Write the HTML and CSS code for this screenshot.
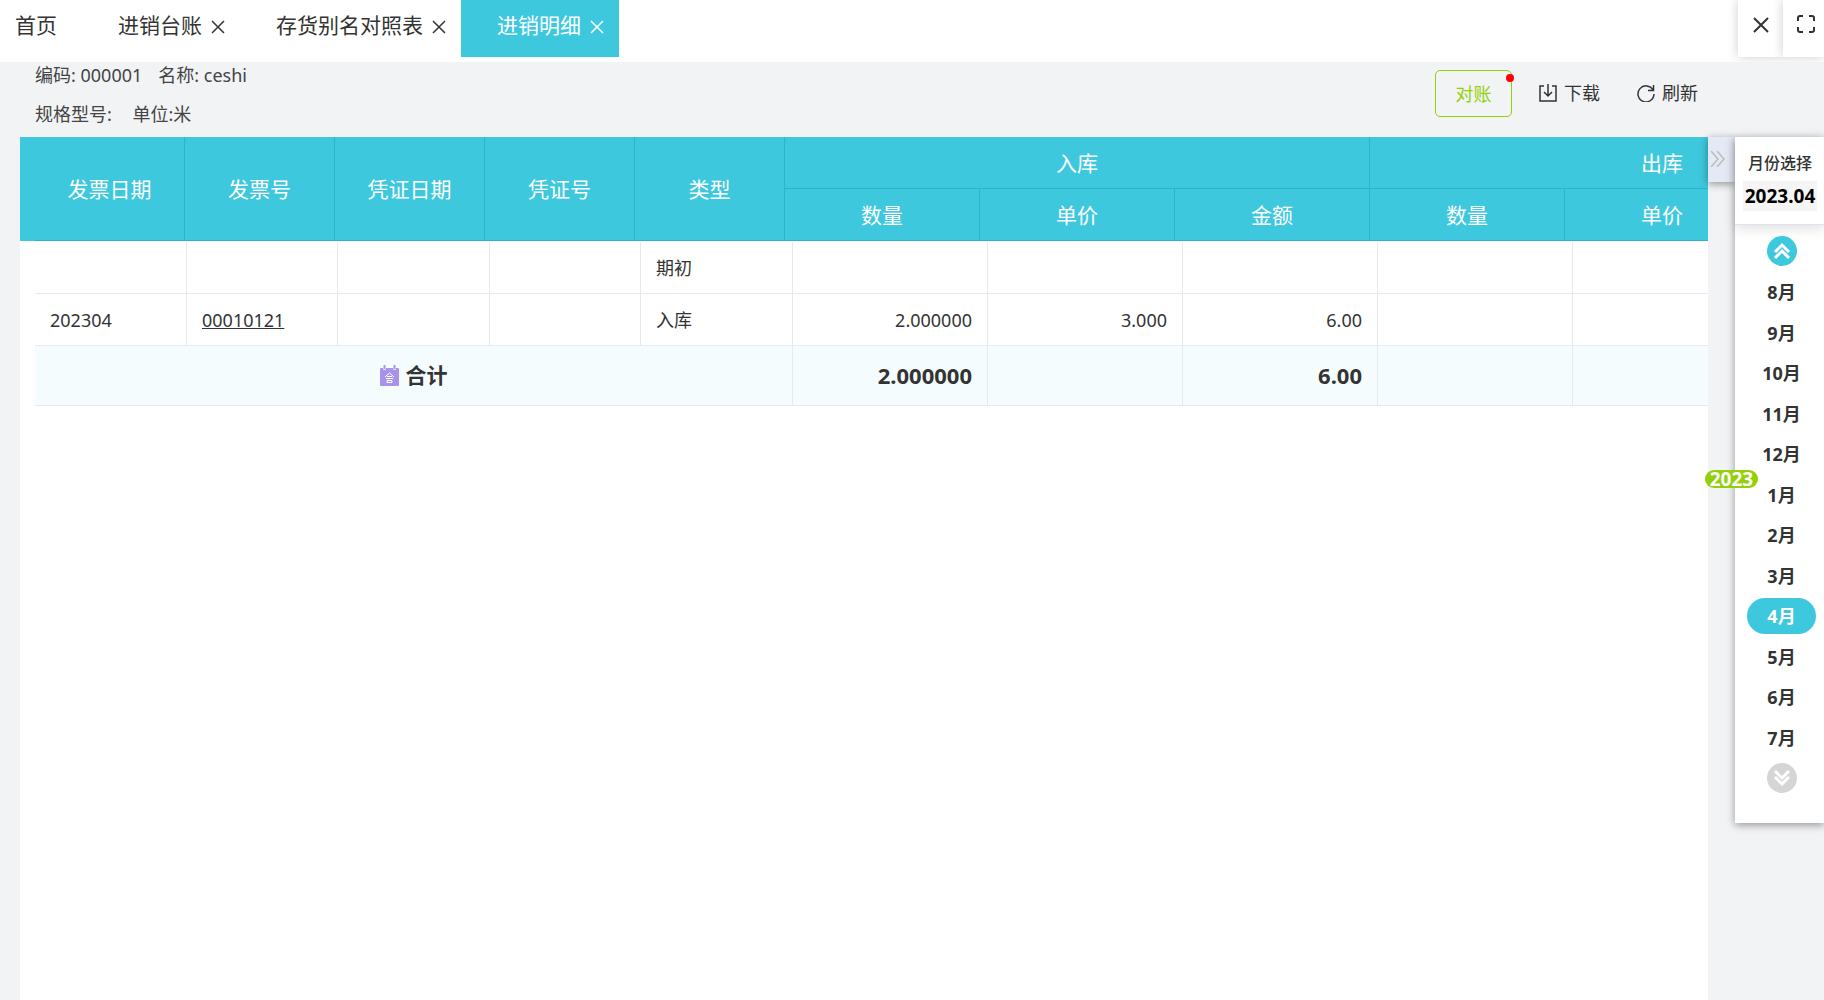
FILE: index.html
```
<!DOCTYPE html>
<html lang="zh-CN">
<head>
    <meta charset="UTF-8">
    <meta name="viewport" content="width=device-width, initial-scale=1.0">
    <title>进销明细</title>
    <link rel="stylesheet" href="styles.css">
</head>
<body>

    <header class="topbar">
        <nav class="tabs">
            <div class="tab home"><a href="#">首页</a></div>
            <div class="tab">
                <a href="#">进销台账</a>
                <button class="tab-close" aria-label="关闭"><svg viewBox="0 0 14 14"><path d="M1 1l12 12M13 1L1 13"/></svg></button>
            </div>
            <div class="tab">
                <a href="#">存货别名对照表</a>
                <button class="tab-close" aria-label="关闭"><svg viewBox="0 0 14 14"><path d="M1 1l12 12M13 1L1 13"/></svg></button>
            </div>
            <div class="tab active">
                <a href="#">进销明细</a>
                <button class="tab-close" aria-label="关闭"><svg viewBox="0 0 14 14"><path d="M1 1l12 12M13 1L1 13"/></svg></button>
            </div>
        </nav>
        <button class="win-btn close-all" aria-label="全部关闭">
            <svg width="16" height="16" viewBox="0 0 16 16"><path d="M1 1l14 14M15 1L1 15"/></svg>
        </button>
        <button class="win-btn fullscreen" aria-label="全屏">
            <svg width="18" height="18" viewBox="0 0 18 18"><path d="M1 6V3q0-2 2-2h3M12 1h3q2 0 2 2v3M17 12v3q0 2-2 2h-3M6 17H3q-2 0-2-2v-3"/></svg>
        </button>
    </header>

    <section class="toolbar">
        <div class="info">
            <p><span>编码: 000001</span><span>名称: ceshi</span></p>
            <p><span>规格型号:&nbsp;</span><span>单位:米</span></p>
        </div>
        <div class="actions">
            <button class="btn-check">对账<i class="dot"></i></button>
            <button class="btn-text">
                <svg width="18" height="18" viewBox="0 0 18 18"><path d="M5 2H1v15h16V2h-4M9 0v12M5 8l4 4 4-4"/></svg>
                下载
            </button>
            <button class="btn-text">
                <svg width="18" height="18" viewBox="0 0 18 18"><path d="M16 6A8 8 0 1 0 17 10M16.500 1v5.500H11"/></svg>
                刷新
            </button>
        </div>
    </section>

    <main class="content">
        <div class="grid">
            <div class="grid-head">
                <table>
                    <colgroup>
                        <col span="5" class="w150">
                        <col span="6" class="w195">
                    </colgroup>
                    <thead>
                        <tr>
                            <th rowspan="2">发票日期</th>
                            <th rowspan="2">发票号</th>
                            <th rowspan="2">凭证日期</th>
                            <th rowspan="2">凭证号</th>
                            <th rowspan="2">类型</th>
                            <th colspan="3">入库</th>
                            <th colspan="3">出库</th>
                        </tr>
                        <tr>
                            <th>数量</th>
                            <th>单价</th>
                            <th>金额</th>
                            <th>数量</th>
                            <th>单价</th>
                            <th></th>
                        </tr>
                    </thead>
                </table>
            </div>
            <div class="grid-body">
                <table>
                    <colgroup>
                        <col class="w152">
                        <col class="w151">
                        <col class="w152">
                        <col class="w151">
                        <col class="w152">
                        <col span="6" class="w195">
                    </colgroup>
                    <tbody>
                        <tr>
                            <td></td>
                            <td></td>
                            <td></td>
                            <td></td>
                            <td>期初</td>
                            <td></td>
                            <td></td>
                            <td></td>
                            <td></td>
                            <td></td>
                            <td></td>
                        </tr>
                        <tr>
                            <td>202304</td>
                            <td><a href="#">00010121</a></td>
                            <td></td>
                            <td></td>
                            <td>入库</td>
                            <td class="num">2.000000</td>
                            <td class="num">3.000</td>
                            <td class="num">6.00</td>
                            <td></td>
                            <td></td>
                            <td></td>
                        </tr>
                    </tbody>
                    <tfoot>
                        <tr>
                            <td colspan="5">
                                <div class="total">
                                    <svg class="total-icon" width="19" height="22" viewBox="0 0 19 22">
                                        <path fill="#a992ea" d="M1 4h2v1q1 2 3 0V4h7v1q2 2 3 0V4h2q1 0 1 1v16q0 1-1 1H1q-1 0-1-1V5q0-1 1-1z"/>
                                        <path stroke="#a992ea" stroke-width="2" d="M4.500 1v4M14.500 1v4"/>
                                        <path fill="none" stroke="#fff" d="M5 13l4.500-4 4.500 4M7 12.500h5M6 14.500h7M7 16.500h5v2H7z"/>
                                    </svg>
                                    <span>合计</span>
                                </div>
                            </td>
                            <td class="num">2.000000</td>
                            <td></td>
                            <td class="num">6.00</td>
                            <td></td>
                            <td></td>
                            <td></td>
                        </tr>
                    </tfoot>
                </table>
            </div>
        </div>

        <aside class="side">
            <button class="fold" aria-label="收起">
                <svg width="16" height="16" viewBox="0 0 16 16"><path d="M1 0l7 8-7 8M7 0l7 8-7 8"/></svg>
            </button>
            <div class="months">
                <div class="months-head">
                    <p class="label">月份选择</p>
                    <p class="current">2023.04</p>
                </div>
                <button class="arrow up" aria-label="上一年">
                    <svg width="18" height="18" viewBox="0 0 18 18"><path d="M2 10l7-7 7 7M2 16l7-7 7 7"/></svg>
                </button>
                <ul class="month-list">
                    <li><button>8月</button></li>
                    <li><button>9月</button></li>
                    <li><button>10月</button></li>
                    <li><button>11月</button></li>
                    <li><button>12月</button></li>
                    <li><span class="year">2023</span><button>1月</button></li>
                    <li><button>2月</button></li>
                    <li><button>3月</button></li>
                    <li><button class="on">4月</button></li>
                    <li><button>5月</button></li>
                    <li><button>6月</button></li>
                    <li><button>7月</button></li>
                </ul>
                <button class="arrow down" aria-label="下一年">
                    <svg width="18" height="18" viewBox="0 0 18 18"><path d="M2 2l7 7 7-7M2 8l7 7 7-7"/></svg>
                </button>
            </div>
        </aside>
    </main>

</body>
</html>
```

FILE: styles.css
```
* {
    box-sizing: border-box;
}

body {
    margin: 0;
    min-height: 100vh;
    display: flex;
    flex-direction: column;
    background: #f2f3f5;
    color: #333;
    font-family: "Noto Sans", "Noto Sans CJK SC", sans-serif;
    font-size: 18px;
    line-height: 24px;
    overflow-x: hidden;
}

p, ul {
    margin: 0;
    padding: 0;
    list-style: none;
}

button {
    padding: 0;
    border: none;
    background: none;
    color: inherit;
    font: inherit;
    cursor: pointer;
}

a {
    color: inherit;
}

svg {
    display: block;
}

/* tabs */
.topbar {
    display: flex;
    height: 62px;
    padding-bottom: 5px;
    background: #fff;
    overflow: hidden;
}

.tabs {
    display: flex;
    flex: 1;
}

.tab {
    display: flex;
    align-items: center;
    gap: 9px;
    padding: 0 15px 7px 36px;
    font-size: 21px;
}

.tab.home {
    padding: 0 25px 7px 15px;
}

.tab.active {
    background: #3ec8de;
    color: #fff;
}

.tab a {
    text-decoration: none;
}

.tab-close {
    padding-top: 4px;
}

.tab-close svg {
    width: 14px;
    height: 14px;
}

.tab-close path, .win-btn path {
    fill: none;
    stroke: currentColor;
    stroke-width: 2;
}

.tab-close path {
    stroke-width: 1.5;
}

.win-btn {
    display: flex;
    justify-content: center;
    padding-top: 17px;
    width: 45px;
    background: #fff;
    box-shadow: 0 0 10px rgba(0, 0, 0, 0.2);
}

.win-btn.fullscreen {
    width: 41px;
    padding: 15px 0 0 4px;
}

/* toolbar */
.toolbar {
    display: flex;
    justify-content: space-between;
    height: 75px;
    padding: 0 126px 0 35px;
}

.info {
    display: flex;
    flex-direction: column;
    gap: 15px;
    padding-top: 1px;
    color: #444;
}

.info p {
    display: flex;
    gap: 16px;
}

.actions {
    display: flex;
    align-items: flex-start;
    gap: 37px;
    padding-top: 8px;
}

.btn-check {
    position: relative;
    width: 77px;
    height: 47px;
    margin-right: -10px;
    border: 1px solid #93d009;
    border-radius: 5px;
    color: #93d009;
}

.dot {
    position: absolute;
    top: 3px;
    right: -3px;
    width: 8px;
    height: 8px;
    border-radius: 50%;
    background: #f00;
}

.btn-text {
    display: flex;
    align-items: center;
    gap: 7px;
    height: 46px;
}

.btn-text path {
    fill: none;
    stroke: #333;
    stroke-width: 1.5;
}

/* table */
.content {
    display: flex;
    flex: 1;
    padding-left: 20px;
}

.grid {
    flex: 1;
    min-width: 0;
    background: #fff;
    overflow: hidden;
}

.grid table {
    width: 0;
    table-layout: fixed;
    border-collapse: separate;
    border-spacing: 0;
}

.w150 { width: 150px; }
.w151 { width: 151px; }
.w152 { width: 152px; }
.w195 { width: 195px; }

.grid-head {
    padding-left: 15px;
    background: #3ec8de;
}

.grid-head th {
    height: 52px;
    padding: 0;
    border-right: 1px solid #2db4ca;
    border-bottom: 1px solid #2db4ca;
    color: #fff;
    font-size: 21px;
    font-weight: 400;
}

.grid-body {
    padding: 1px 0 0 15px;
}

.grid-body td {
    height: 52px;
    padding: 0 15px;
    border-right: 1px solid #e6e8f3;
    border-bottom: 1px solid #e6e8f3;
}

.grid-body .num {
    text-align: right;
}

.grid-body tfoot td {
    height: 60px;
    padding-bottom: 2px;
    background: #f4fcfe;
    font-size: 22px;
    font-weight: 700;
}

.total {
    display: flex;
    align-items: center;
    justify-content: center;
    gap: 7px;
    font-size: 21px;
}

/* month picker */
.side {
    display: flex;
    align-items: flex-start;
    width: 116px;
}

.fold {
    width: 27px;
    height: 45px;
    padding: 0 0 1px 2px;
    background: #e4e9f5;
    box-shadow: 0 2px 8px rgba(0, 0, 0, 0.4);
}

.fold path {
    fill: none;
    stroke: #bbb;
    stroke-width: 1.5;
}

.months {
    position: relative;
    display: flex;
    flex-direction: column;
    align-items: center;
    flex: 1;
    padding-bottom: 30px;
    background: #fff;
    box-shadow: 0 2px 8px rgba(0, 0, 0, 0.4);
    font-weight: 700;
}

.months-head {
    display: flex;
    flex-direction: column;
    align-items: center;
    gap: 6px;
    width: 100%;
    height: 88px;
    padding: 14px 0 0 1px;
    border-bottom: 1px solid #dfe2ee;
    box-shadow: 0 4px 12px rgba(0, 0, 0, 0.12);
}

.months-head .label {
    font-size: 16px;
    font-weight: 500;
}

.months-head .current {
    padding: 0 2px;
    background: #f5f5f5;
    color: #000;
    font-size: 19px;
    line-height: 30px;
}

.arrow {
    display: flex;
    align-items: center;
    justify-content: center;
    width: 30px;
    height: 30px;
    margin-left: 4px;
    border-radius: 50%;
    background: #d5d5d5;
}

.arrow.up {
    margin-top: 11px;
    background: #3ec8de;
}

.arrow path {
    fill: none;
    stroke: #fff;
    stroke-width: 3;
}

.month-list {
    display: flex;
    flex-direction: column;
    justify-content: space-between;
    height: 482px;
    margin: 8px 0 7px 4px;
}

.month-list li {
    position: relative;
}

.month-list button {
    display: block;
    width: 69px;
    height: 36px;
    border-radius: 18px;
}

.month-list .on {
    background: #3ec8de;
    color: #fff;
}

.year {
    position: absolute;
    top: -7px;
    left: -42px;
    width: 53px;
    border-radius: 9px;
    background: #93d009;
    color: #fff;
    font-size: 19px;
    line-height: 18px;
    text-align: center;
}
```
